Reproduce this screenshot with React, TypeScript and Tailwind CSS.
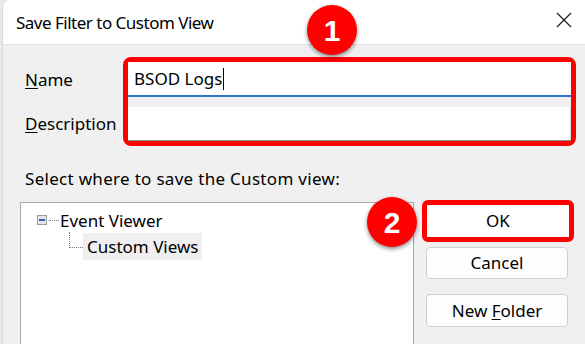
import React from 'react';

const Badge: React.FC<{ n: string; className: string }> = ({ n, className }) => (
  <div
    className={`absolute w-[50px] h-[50px] rounded-full bg-[#ff0000] flex items-center justify-center text-white text-[30px] font-bold shadow-[0_2px_4px_rgba(0,0,0,0.45)] ${className}`}
    style={{ fontFamily: '"Liberation Sans", Arial, sans-serif' }}
  >
    {n}
  </div>
);

const Btn: React.FC<{ children: React.ReactNode; className?: string }> = ({ children, className = '' }) => (
  <button className={`w-[142px] bg-[#fdfdfd] border border-[#d0d0d0] rounded-[4px] text-[17px] text-black flex items-center justify-center ${className}`}>
    {children}
  </button>
);

export default function App() {
  return (
    <div
      className="relative w-[585px] h-[344px] overflow-hidden bg-[#e9e9e9] text-black"
      style={{ fontFamily: '"Noto Sans", "Open Sans", sans-serif' }}
    >
      <div className="ml-[2px] h-full rounded-tl-[8px] bg-[#f0f0f0] border-l border-[#d8d8d8] overflow-hidden">
        {/* title bar */}
        <div className="h-[45px] bg-white border-b border-[#e4e4e4] flex items-center justify-between pl-[13px] pr-[13px]">
          <span className="text-[17px] tracking-[-0.5px] leading-none">Save Filter to Custom View</span>
          <svg width="16" height="16" viewBox="0 0 16 16" className="text-[#1a1a1a] -mt-[4px]">
            <path d="M1 1 L15 15 M15 1 L1 15" stroke="currentColor" strokeWidth="1.2" fill="none" />
          </svg>
        </div>

        <div className="pl-[17px]">
          {/* name / description */}
          <div className="flex mt-[12px]">
            <div className="w-[103px] pl-[5px] pt-[5px] flex flex-col text-[17px]">
              <div className="h-[35px] flex items-center">
                <span><span className="underline underline-offset-2">N</span>ame</span>
              </div>
              <div className="h-[10px]" />
              <div className="h-[34px] flex items-center">
                <span><span className="underline underline-offset-2">D</span>escription</span>
              </div>
            </div>
            <div className="w-[453px] border-[5px] border-[#ff0000] rounded-[8px] flex flex-col">
              <div className="h-[35px] bg-white border-b-2 border-[#2f74c8] flex items-center pl-[6px] text-[17px]">
                BSOD Logs<span className="inline-block w-px h-[22px] bg-black ml-[1px]" />
              </div>
              <div className="h-[10px] bg-[#f0f0f0]" />
              <div className="h-[34px] bg-white border-b border-[#8a8a8a] shadow-[inset_-1px_0_0_#d6d6d6]" />
            </div>
          </div>

          <div className="pl-[5px] mt-[21px] text-[17px] leading-[23px] tracking-[0.3px]">Select where to save the Custom view:</div>

          <div className="flex mt-[12px]">
            {/* tree */}
            <div className="w-[394px] h-[160px] bg-white border border-[#a8a8a8] pt-[5px] text-[17px]">
              <div className="flex items-center h-[24px] pl-[16px]">
                <div className="w-[10px] h-[10px] border border-[#9a9a9a] bg-[#e6e6e6] flex items-center justify-center">
                  <div className="w-[6px] h-[1.5px] bg-[#3a5cc0]" />
                </div>
                <div className="w-[10px] ml-[2px] border-t border-dotted border-[#777]" />
                <span className="ml-[1px] leading-none">Event Viewer</span>
              </div>
              <div className="flex items-start pl-[48px]">
                <div className="w-[14px] h-[16px] border-l border-b border-dotted border-[#777]" />
                <div className="mt-[1px] h-[27px] px-[4px] bg-[#efefef] flex items-center leading-none">Custom Views</div>
              </div>
            </div>

            {/* buttons */}
            <div className="ml-[8px] flex flex-col">
              <div className="w-[152px] border-[5px] border-[#ff0000] rounded-[6px] -mt-[2px]">
                <div className="h-[32px] bg-white flex items-center justify-center text-[17px]">OK</div>
              </div>
              <Btn className="ml-[4px] mt-[5px] h-[32px]">Cancel</Btn>
              <Btn className="ml-[4px] mt-[15px] h-[33px]">
                <span>New <span className="underline underline-offset-2">F</span>older</span>
              </Btn>
            </div>
          </div>
        </div>
      </div>

      <Badge n="1" className="left-[307px] top-[5px]" />
      <Badge n="2" className="left-[367px] top-[197px]" />
    </div>
  );
}
